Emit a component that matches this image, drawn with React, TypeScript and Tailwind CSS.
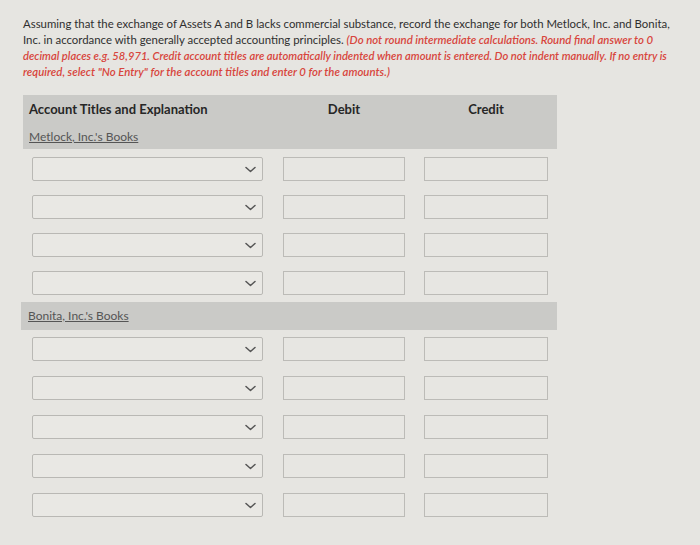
const metlockRows = [0, 1, 2, 3]
const bonitaRows = [0, 1, 2, 3, 4]

function Chevron() {
  return (
    <svg width="11" height="7" viewBox="0 0 11 7" className="shrink-0">
      <polyline points="1,1.5 5.5,5.5 10,1.5" fill="none" stroke="#555" strokeWidth="1.5" strokeLinecap="round" strokeLinejoin="round" />
    </svg>
  )
}

function EntryRow() {
  return (
    <div className="flex items-center pl-[9px] h-[24px]">
      <div className="w-[231px] h-full flex items-center justify-end pr-[6px] border border-[#b9b8b4] rounded-[2px] bg-[#e9e8e4]">
        <Chevron />
      </div>
      <div className="ml-[20px] w-[122px] h-full border border-[#bcbbb7] bg-[#e7e6e2]" />
      <div className="ml-[19px] w-[124px] h-full border border-[#bcbbb7] bg-[#e7e6e2]" />
    </div>
  )
}

export default function App() {
  return (
    <div className="w-[700px] h-[545px] overflow-hidden bg-[#e6e5e1] text-[#2f2f2f] pl-[23px] pt-[16px]" style={{ fontFamily: 'Lato, "Open Sans", sans-serif' }}>
      <div className="text-[11.4px] leading-[16px] whitespace-nowrap">
        <div>Assuming that the exchange of Assets A and B lacks commercial substance, record the exchange for both Metlock, Inc. and Bonita,</div>
        <div>
          Inc. in accordance with generally accepted accounting principles.{' '}
          <span className="italic font-semibold text-[#d8453d]">(Do not round intermediate calculations. Round final answer to 0</span>
        </div>
        <div className="italic font-semibold text-[#d8453d] text-[11.2px]">decimal places e.g. 58,971. Credit account titles are automatically indented when amount is entered. Do not indent manually. If no entry is</div>
        <div className="italic font-semibold text-[#d8453d]">required, select "No Entry" for the account titles and enter 0 for the amounts.)</div>
      </div>

      <div className="w-[534px] mt-[15px]">
        <div className="bg-[#cacac7] pt-[6px] pb-[4px] pl-[6px] h-[54px]">
          <div className="flex text-[13px] leading-[16px] font-bold text-[#262626]">
            <div className="w-[244px]">Account Titles and Explanation</div>
            <div className="w-[142px] text-center">Debit</div>
            <div className="w-[142px] text-center">Credit</div>
          </div>
          <div className="mt-[12px] text-[12px] leading-[16px] text-[#555] underline">Metlock, Inc.'s Books</div>
        </div>

        <div className="flex flex-col gap-[14px] pt-[8px]">
          {metlockRows.map((r) => (
            <EntryRow key={r} />
          ))}
        </div>

        <div className="mt-[7px] -ml-[2px] bg-[#cacac7] h-[28px] flex items-center pl-[7px]">
          <span className="text-[12px] leading-[16px] text-[#555] underline">Bonita, Inc.'s Books</span>
        </div>

        <div className="flex flex-col gap-[15px] pt-[7px]">
          {bonitaRows.map((r) => (
            <EntryRow key={r} />
          ))}
        </div>
      </div>
    </div>
  )
}
